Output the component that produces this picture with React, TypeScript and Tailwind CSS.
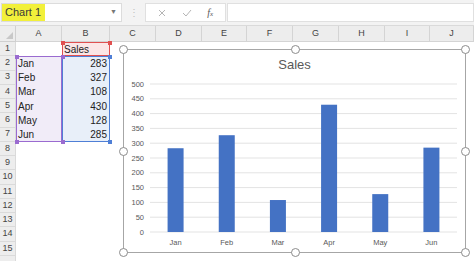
import React from 'react';

const cols = ['A', 'B', 'C', 'D', 'E', 'F', 'G', 'H', 'I', 'J'];
const data: [string, number][] = [
  ['Jan', 283],
  ['Feb', 327],
  ['Mar', 108],
  ['Apr', 430],
  ['May', 128],
  ['Jun', 285],
];

// chart geometry, in chart-frame pixels
const plotLeft = 26;
const plotRight = 333;
const zeroY = 182;
const topY = 34;
const catW = (plotRight - plotLeft) / data.length;

const Handle = ({ className }: { className: string }) => (
  <div className={`absolute w-[9px] h-[9px] rounded-full border border-[#8c8c8c] bg-white ${className}`} />
);

const Corner = ({ className, color }: { className: string; color: string }) => (
  <div className={`absolute w-[4px] h-[4px] ${color} ${className}`} />
);

const SalesChart = () => (
  <div className="absolute left-[123px] top-[23px] w-[343px] h-[204px] bg-white border border-[#a6a6a6]">
    <div className="absolute left-0 right-0 top-[5px] text-center text-[13px] text-[#595959] font-['Liberation_Sans',sans-serif]">
      Sales
    </div>
    <svg width="343" height="204" className="absolute left-0 top-0" style={{ fontFamily: 'Liberation Sans, sans-serif' }}>
      {[0, 50, 100, 150, 200, 250, 300, 350, 400, 450, 500].map((v) => {
        const y = zeroY - ((zeroY - topY) * v) / 500;
        return (
          <g key={v}>
            <line x1={plotLeft} x2={plotRight} y1={y} y2={y} stroke="#e3e3e3" strokeWidth="1" />
            <text x={20} y={y + 2.5} fontSize="7.5" fill="#595959" textAnchor="end">
              {v}
            </text>
          </g>
        );
      })}
      {data.map(([m, v], i) => {
        const cx = plotLeft + catW * (i + 0.5);
        const h = ((zeroY - topY) * v) / 500;
        return (
          <g key={m}>
            <rect x={cx - 8} y={zeroY - h} width="16" height={h} fill="#4472c4" />
            <text x={cx} y={zeroY + 13} fontSize="7.5" fill="#595959" textAnchor="middle">
              {m}
            </text>
          </g>
        );
      })}
    </svg>
    <Handle className="-left-[5px] -top-[5px]" />
    <Handle className="left-[167px] -top-[5px]" />
    <Handle className="-right-[5px] -top-[5px]" />
    <Handle className="-left-[5px] top-[97px]" />
    <Handle className="-right-[5px] top-[97px]" />
    <Handle className="-left-[5px] -bottom-[5px]" />
    <Handle className="left-[167px] -bottom-[5px]" />
    <Handle className="-right-[5px] -bottom-[5px]" />
  </div>
);

const App = () => {
  return (
    <div className="w-[474px] h-[261px] overflow-hidden bg-white font-['Liberation_Sans',sans-serif] text-[10px] text-[#222]">
      {/* formula bar */}
      <div className="h-[26px] bg-[#f3f3f3] border-b border-[#dadada] flex items-center pl-[1px]">
        <div className="w-[121px] h-[19px] bg-white border border-[#dcdcdc] flex items-center">
          <div className="h-[17px] w-[43px] bg-[#f2f03a] flex items-center pl-[3px] text-[11px] text-[#3a3a3a]">
            Chart 1
          </div>
          <div className="flex-1" />
          <span className="text-[7px] text-[#777] pr-[4px]">▼</span>
        </div>
        <div className="w-[23px] text-center text-[#c0c0c0] text-[10px]">⋮</div>
        <div className="w-[81px] h-[19px] bg-white border border-[#e0e0e0] flex items-center justify-around px-[4px]">
          <svg width="8" height="8" viewBox="0 0 8 8">
            <path d="M1 1 L7 7 M7 1 L1 7" stroke="#b5b5b5" strokeWidth="1" />
          </svg>
          <svg width="10" height="8" viewBox="0 0 10 8">
            <path d="M1 4 L4 7 L9 1" stroke="#b5b5b5" strokeWidth="1" fill="none" />
          </svg>
          <span className="italic text-[10px] text-[#555] font-['Liberation_Serif',serif]">
            f<span className="text-[7px]">x</span>
          </span>
        </div>
        <div className="flex-1 h-[19px] bg-white border border-[#e0e0e0] ml-[1px]" />
      </div>

      {/* sheet */}
      <div className="relative">
        <div className="grid grid-cols-[16px_46px_48px_46px_46px_45px_46px_46px_46px_45px_44px]">
          <div className="h-[16px] bg-[#ededed] border-r border-b border-[#d0d0d0] relative">
            <div className="absolute right-[2px] bottom-[2px] w-0 h-0 border-l-[7px] border-l-transparent border-b-[7px] border-b-[#c8c8c8]" />
          </div>
          {cols.map((c) => (
            <div
              key={c}
              className="h-[16px] bg-[#ededed] border-r border-b border-[#d4d4d4] flex items-center justify-center text-[9px] text-[#444]"
            >
              {c}
            </div>
          ))}
          {Array.from({ length: 16 }, (_, r) => {
            const row = r + 1;
            const d = row >= 2 && row <= 7 ? data[row - 2] : null;
            return (
              <React.Fragment key={row}>
                <div className="h-[14.27px] bg-[#ededed] border-r border-b border-[#dadada] flex items-center justify-center text-[9px] text-[#444]">
                  {row < 16 ? row : ''}
                </div>
                <div className={`h-[14.27px] flex items-center pl-[2px] ${d ? 'bg-[#f1ecf8]' : ''}`}>{d ? d[0] : ''}</div>
                <div
                  className={`h-[14.27px] flex items-center ${
                    row === 1 ? 'bg-[#fbe6e6] pl-[2px]' : d ? 'bg-[#e8eff9] justify-end pr-[3px]' : ''
                  }`}
                >
                  {row === 1 ? 'Sales' : d ? d[1] : ''}
                </div>
                {cols.slice(2).map((c) => (
                  <div key={c} className="h-[14.27px]" />
                ))}
              </React.Fragment>
            );
          })}
        </div>

        {/* reference range highlights */}
        <div className="absolute left-[62px] top-[16px] w-[48px] h-[14.27px] border border-[#e05050]" />
        <div className="absolute left-[16px] top-[30.27px] w-[46px] h-[85.6px] border border-[#9a6bd0]" />
        <div className="absolute left-[62px] top-[30.27px] w-[48px] h-[85.6px] border border-[#4f7fd6]" />
        <Corner color="bg-[#e05050]" className="left-[60.5px] top-[14.5px]" />
        <Corner color="bg-[#e05050]" className="left-[108px] top-[14.5px]" />
        <Corner color="bg-[#9a6bd0]" className="left-[14.5px] top-[28.5px]" />
        <Corner color="bg-[#9a6bd0]" className="left-[60.5px] top-[28.5px]" />
        <Corner color="bg-[#9a6bd0]" className="left-[14.5px] top-[114px]" />
        <Corner color="bg-[#9a6bd0]" className="left-[60.5px] top-[114px]" />
        <Corner color="bg-[#4f7fd6]" className="left-[108px] top-[28.5px]" />
        <Corner color="bg-[#4f7fd6]" className="left-[108px] top-[114px]" />

        <SalesChart />
      </div>
    </div>
  );
};

export default App;
